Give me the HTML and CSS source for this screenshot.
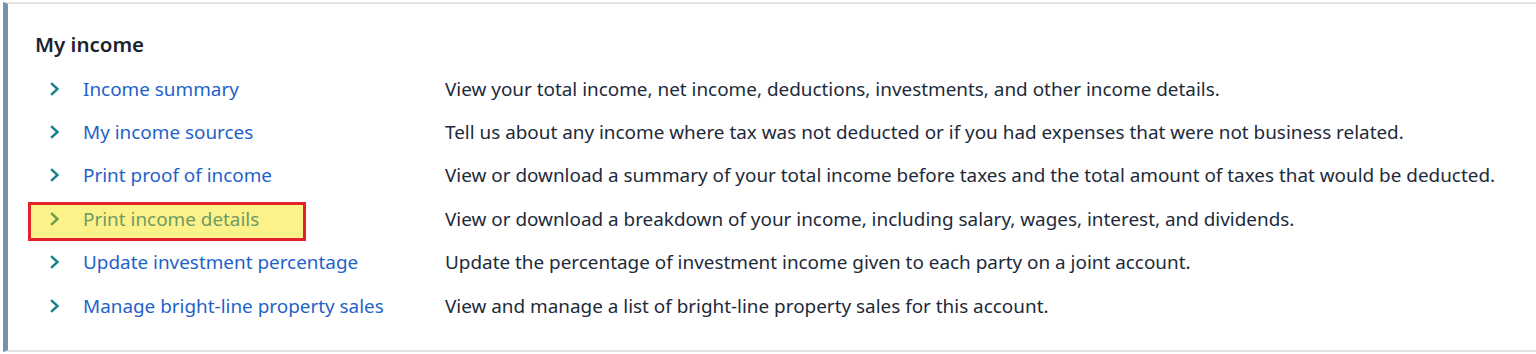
FILE: index.html
```html
<!DOCTYPE html>
<html lang="en">
<head>
    <meta charset="UTF-8">
    <meta name="viewport" content="width=device-width, initial-scale=1.0">
    <title>My income</title>
    <link rel="stylesheet" href="styles.css">
</head>
<body>
    <div class="panel">
        <h2>My income</h2>
        <ul class="links">
            <li class="link-row">
                <a href="#"><svg class="chev" viewBox="0 0 10 14"><polyline points="2,2 7.5,7 2,12"/></svg>Income summary</a>
                <span class="desc">View your total income, net income, deductions, investments, and other income details.</span>
            </li>
            <li class="link-row">
                <a href="#"><svg class="chev" viewBox="0 0 10 14"><polyline points="2,2 7.5,7 2,12"/></svg>My income sources</a>
                <span class="desc">Tell us about any income where tax was not deducted or if you had expenses that were not business related.</span>
            </li>
            <li class="link-row">
                <a href="#"><svg class="chev" viewBox="0 0 10 14"><polyline points="2,2 7.5,7 2,12"/></svg>Print proof of income</a>
                <span class="desc">View or download a summary of your total income before taxes and the total amount of taxes that would be deducted.</span>
            </li>
            <li class="link-row marked">
                <a href="#"><svg class="chev" viewBox="0 0 10 14"><polyline points="2,2 7.5,7 2,12"/></svg>Print income details</a>
                <span class="desc">View or download a breakdown of your income, including salary, wages, interest, and dividends.</span>
            </li>
            <li class="link-row">
                <a href="#"><svg class="chev" viewBox="0 0 10 14"><polyline points="2,2 7.5,7 2,12"/></svg>Update investment percentage</a>
                <span class="desc">Update the percentage of investment income given to each party on a joint account.</span>
            </li>
            <li class="link-row">
                <a href="#"><svg class="chev" viewBox="0 0 10 14"><polyline points="2,2 7.5,7 2,12"/></svg>Manage bright-line property sales</a>
                <span class="desc">View and manage a list of bright-line property sales for this account.</span>
            </li>
        </ul>
    </div>
</body>
</html>
```

FILE: styles.css
```css
body {
    margin: 0;
    background-color: #ffffff;
    font-family: "Noto Sans", "Open Sans", sans-serif;
    color: #1d2a3a;
}
.panel {
    margin: 2px 0 0 3px;
    height: 350px;
    box-sizing: border-box;
    border-top: 2px solid #e4e4e4;
    border-bottom: 2px solid #e4e4e4;
    border-left: 5px solid #7393ad;
    padding: 27px 0 0 27px;
}
.panel h2 {
    margin: 0 0 10px 0;
    font-size: 20.5px;
    font-weight: 600;
    line-height: 26px;
    color: #1b2230;
}
.links {
    list-style: none;
    margin: 0;
    padding: 0;
}
.link-row {
    display: grid;
    grid-template-columns: 410px 1fr;
    height: 43.4px;
    align-items: center;
    font-size: 18.9px;
    position: relative;
}
.link-row a {
    display: flex;
    align-items: center;
    color: #1f62c9;
    text-decoration: none;
    padding-left: 15px;
}
.chev {
    width: 10px;
    height: 14px;
    margin-right: 23px;
    fill: none;
    stroke: #17808d;
    stroke-width: 2.4;
    stroke-linecap: square;
}
.desc {
    color: #1d2a3a;
    white-space: nowrap;
}
.marked a {
    color: #6f9a63;
}
.marked .chev {
    stroke: #6a9c4b;
}
.marked::before {
    content: "";
    position: absolute;
    left: -7px;
    top: 5px;
    width: 272px;
    height: 33px;
    background-color: #fcf28a;
    border: 3px solid #e3232a;
    z-index: -1;
}
```
